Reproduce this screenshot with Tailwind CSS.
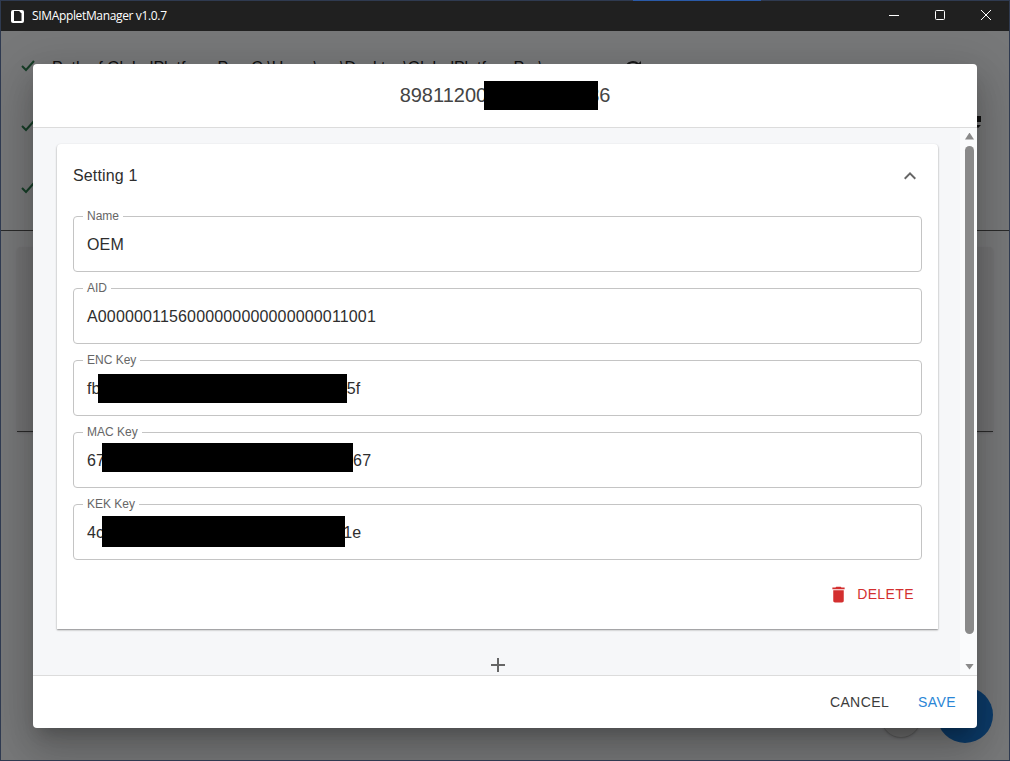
<!DOCTYPE html>
<html lang="en">
  <head>
    <meta charset="UTF-8" />
    <title>SIMAppletManager v1.0.7</title>
    <script src="https://cdn.jsdelivr.net/npm/@tailwindcss/browser@4"></script>
  </head>
  <body class="h-screen overflow-hidden font-['Liberation_Sans',Arial,sans-serif]">
    <div class="relative h-[761px] flex flex-col border border-[#2f3a50] bg-[#202020]">
      <div class="absolute -top-px left-[632px] w-[128px] h-px bg-[#2a5aa8]"></div>
      <!-- title bar -->
      <header class="h-[30px] shrink-0 flex items-center bg-[#202020] text-white">
        <div class="ml-[10px] w-[13px] h-[13px] bg-white rounded-[2px] flex items-center justify-center">
          <div class="w-[8px] h-[10px] bg-[#202020] [clip-path:polygon(0_0,70%_0,100%_25%,100%_100%,0_100%)]"></div>
        </div>
        <span class="ml-[8px] text-xs tracking-[-0.35px] font-['Open_Sans',sans-serif]">SIMAppletManager v1.0.7</span>
        <div class="ml-auto flex items-center text-white">
          <svg class="w-[46px] h-[30px]" viewBox="0 0 46 30"><path d="M18 14.5h10" stroke="currentColor" fill="none"/></svg>
          <svg class="w-[46px] h-[30px]" viewBox="0 0 46 30"><rect x="18.5" y="9.5" width="9" height="9" rx="1" stroke="currentColor" fill="none"/></svg>
          <svg class="w-[46px] h-[30px]" viewBox="0 0 46 30"><path d="M18 9l10 10M28 9L18 19" stroke="currentColor" fill="none"/></svg>
        </div>
      </header>

      <!-- page behind the dialog -->
      <main class="relative flex-1 bg-[#eff0f3] overflow-hidden">
        <div class="h-[200px] border-b border-[#555] text-[#222]">
          <div class="h-[74px] pt-[25px] pl-[20px] flex items-start gap-[17px]">
            <svg class="w-[14px] h-[14px] mt-[3px] text-[#2e7d4f]" viewBox="0 0 14 14"><path d="M1 7l4 4 8-9" stroke="currentColor" stroke-width="2" fill="none"/></svg>
            <span class="w-[552px] mt-[2px] text-base leading-[20px] whitespace-nowrap overflow-hidden">Path of GlobalPlatform Pro: C:\Users\me\Desktop\GlobalPlatformPro\gp.exe</span>
            <svg class="w-[24px] h-[24px] mt-[1px] text-[#333]" viewBox="0 0 24 24" fill="currentColor"><path d="M17.65 6.35A7.958 7.958 0 0012 4c-4.42 0-7.99 3.58-7.99 8s3.57 8 7.99 8c3.73 0 6.84-2.55 7.73-6h-2.08A5.99 5.99 0 0112 18c-3.31 0-6-2.69-6-6s2.69-6 6-6c1.66 0 3.14.69 4.22 1.78L13 11h7V4l-2.35 2.35z"/></svg>
          </div>
          <div class="h-[62px] pt-[14px] pl-[20px] flex items-start">
            <svg class="w-[14px] h-[14px] text-[#2e7d4f]" viewBox="0 0 14 14"><path d="M1 7l4 4 8-9" stroke="currentColor" stroke-width="2" fill="none"/></svg>
            <svg class="w-[16px] h-[16px] ml-auto mr-[28px] -mt-[5px] text-[#222]" viewBox="0 0 16 16" fill="currentColor"><path d="M4 2h12v6H4zM10 11h6l-3 3z"/></svg>
          </div>
          <div class="pt-[14px] pl-[20px]">
            <svg class="w-[14px] h-[14px] text-[#2e7d4f]" viewBox="0 0 14 14"><path d="M1 7l4 4 8-9" stroke="currentColor" stroke-width="2" fill="none"/></svg>
          </div>
        </div>
        <div class="mx-4 mt-4 h-[185px] rounded-t border-b border-[#555] bg-[#e4e4e6] shadow-sm"></div>

        <div class="absolute left-[880px] top-[667px] w-[40px] h-[40px] rounded-full border border-[#bbb] bg-[#e0e0e0] shadow"></div>
        <div class="absolute left-[936px] top-[656px] w-[56px] h-[56px] rounded-full bg-[#1976d2]"></div>

        <!-- dialog -->
        <div class="absolute inset-0 bg-black/50 flex items-center justify-center">
          <section class="w-[944px] h-[664px] flex flex-col bg-white rounded shadow-[0_11px_15px_-7px_rgba(0,0,0,0.2),0_24px_38px_3px_rgba(0,0,0,0.14),0_9px_46px_8px_rgba(0,0,0,0.12)] overflow-hidden">
            <div class="h-[64px] shrink-0 flex items-center justify-center border-b border-[#dcdcdc] text-xl text-[#444]">
              <span>89811200</span><span class="relative inline-block h-[29px] w-[114px] -ml-[3px] -mr-[10px] bg-black"></span><span>36</span>
            </div>

            <div class="flex-1 min-h-0 flex bg-[#f6f7f9]">
              <div class="flex-1 pl-[24px] pr-[22px] pt-[16px] overflow-hidden">
                <div class="bg-white rounded-t shadow-[0_1px_2px_rgba(0,0,0,0.45)] h-[485px] px-[16px]">
                  <div class="h-[64px] flex items-center justify-between text-base tracking-[0.15px] text-[#2e2e2e]">
                    <span>Setting 1</span>
                    <svg class="w-[24px] h-[24px] text-[#666]" viewBox="0 0 24 24" fill="currentColor"><path d="M12 8l-6 6 1.41 1.41L12 10.83l4.59 4.58L18 14z"/></svg>
                  </div>
                  <div class="mt-[8px] flex flex-col gap-[16px] text-base tracking-[0.15px] text-[#2e2e2e]">
                    <div class="relative h-[56px] px-[13px] pt-[2px] flex items-center border border-[#c4c4c4] rounded">
                      <span class="absolute -top-[9px] left-[9px] px-[4px] bg-white text-xs tracking-normal text-[#666]">Name</span>
                      <span>OEM</span>
                    </div>
                    <div class="relative h-[56px] px-[13px] pt-[2px] flex items-center border border-[#c4c4c4] rounded">
                      <span class="absolute -top-[9px] left-[9px] px-[4px] bg-white text-xs tracking-normal text-[#666]">AID</span>
                      <span>A0000001156000000000000000011001</span>
                    </div>
                    <div class="relative h-[56px] px-[13px] pt-[2px] flex items-center border border-[#c4c4c4] rounded">
                      <span class="absolute -top-[9px] left-[9px] px-[4px] bg-white text-xs tracking-normal text-[#666]">ENC Key</span>
                      <span>fb</span><span class="relative h-[29px] w-[249px] -ml-[3px] bg-black"></span><span>5f</span>
                    </div>
                    <div class="relative h-[56px] px-[13px] pt-[2px] flex items-center border border-[#c4c4c4] rounded">
                      <span class="absolute -top-[9px] left-[9px] px-[4px] bg-white text-xs tracking-normal text-[#666]">MAC Key</span>
                      <span>67</span><span class="relative h-[29px] w-[251px] -ml-[3px] -translate-y-[3px] bg-black"></span><span>67</span>
                    </div>
                    <div class="relative h-[56px] px-[13px] pt-[2px] flex items-center border border-[#c4c4c4] rounded">
                      <span class="absolute -top-[9px] left-[9px] px-[4px] bg-white text-xs tracking-normal text-[#666]">KEK Key</span>
                      <span>4c</span><span class="relative h-[31px] w-[243px] -ml-[2px] -translate-y-[1px] bg-black"></span><span class="-ml-[2px]">1e</span>
                    </div>
                  </div>
                  <div class="h-[69px] flex items-center justify-end pr-[8px] gap-[8px] text-sm tracking-[0.4px] text-[#d32f2f]">
                    <svg class="w-[21px] h-[21px]" viewBox="0 0 24 24" fill="currentColor"><path d="M6 19c0 1.1.9 2 2 2h8c1.1 0 2-.9 2-2V7H6v12zM19 4h-3.5l-1-1h-5l-1 1H5v2h14V4z"/></svg>
                    <span>DELETE</span>
                  </div>
                </div>
                <div class="mt-[28px] flex justify-center">
                  <svg class="w-[16px] h-[16px] text-[#666]" viewBox="0 0 16 16"><path d="M8 1v14M1 8h14" stroke="currentColor" stroke-width="2" fill="none"/></svg>
                </div>
              </div>
              <!-- scrollbar -->
              <div class="w-[17px] shrink-0 bg-[#fafbfc] flex flex-col pl-[5px] pr-[3px] pt-[5px] pb-[5px]">
                <div class="h-[7px] bg-[#8a8a8a] [clip-path:polygon(50%_0,100%_100%,0_100%)]"></div>
                <div class="mt-[6px] h-[488px] bg-[#8a8a8a] rounded-full"></div>
                <div class="mt-auto h-[6px] bg-[#8a8a8a] [clip-path:polygon(0_0,100%_0,50%_100%)]"></div>
              </div>
            </div>

            <div class="h-[53px] shrink-0 border-t border-[#dcdcdc] flex items-center justify-end pr-[21px] gap-[29px] text-sm tracking-[0.4px]">
              <span class="text-[#3c3c3c]">CANCEL</span>
              <span class="text-[#2a86d6]">SAVE</span>
            </div>
          </section>
        </div>
      </main>
    </div>
  </body>
</html>
